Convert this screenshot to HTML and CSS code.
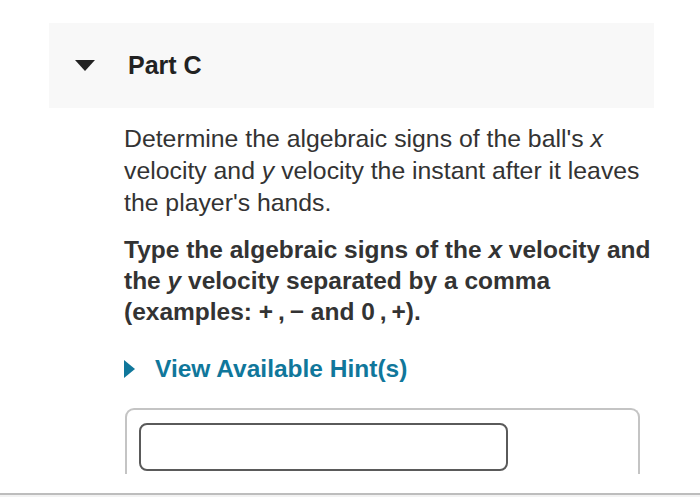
FILE: index.html
```html
<!DOCTYPE html>
<html>
<head>
<meta charset="utf-8">
<link rel="stylesheet" href="styles.css">
</head>
<body>
<div class="page">
  <div class="part-header">
    <span class="caret-down"></span>
    <span class="part-title">Part C</span>
  </div>
  <div class="part-body">
    <p class="prompt">Determine the algebraic signs of the ball's <i>x</i> velocity and <i>y</i> velocity the instant after it leaves the player's hands.</p>
    <p class="instr">Type the algebraic signs of the <i>x</i> velocity and the <i>y</i> velocity separated by a comma (examples: +&thinsp;,&thinsp;&minus; and 0&thinsp;,&thinsp;+).</p>
    <div class="hint">
      <span class="caret-right"></span>
      <span class="hint-text">View Available Hint(s)</span>
    </div>
    <div class="answer-box">
      <div class="answer-input"></div>
    </div>
  </div>
</div>
<div class="footer-line"></div>
</body>
</html>
```

FILE: styles.css
```css
html, body {
  margin: 0;
  padding: 0;
  background: #ffffff;
}
body {
  font-family: "Liberation Sans", Arial, sans-serif;
  color: #333333;
  width: 700px;
  height: 497px;
  overflow: hidden;
}
.page {
  height: 474px;
  overflow: hidden;
  padding-top: 23px;
  box-sizing: border-box;
}
.part-header {
  margin-left: 49px;
  width: 605px;
  height: 85px;
  background: #f8f8f8;
  display: flex;
  align-items: center;
}
.caret-down {
  width: 0;
  height: 0;
  border-left: 10px solid transparent;
  border-right: 10px solid transparent;
  border-top: 11px solid #222222;
  margin-left: 26px;
  margin-right: 33px;
}
.part-title {
  font-size: 25px;
  font-weight: bold;
  color: #222222;
}
.part-body {
  padding-left: 124px;
  padding-right: 40px;
}
.prompt {
  margin: 15px 0 0 0;
  font-size: 24.8px;
  line-height: 32px;
}
.instr {
  margin: 15px 0 0 0;
  font-size: 24.5px;
  line-height: 31px;
  font-weight: bold;
}
.hint {
  display: flex;
  align-items: center;
  margin-top: 27px;
  height: 30px;
}
.caret-right {
  width: 0;
  height: 0;
  border-top: 9px solid transparent;
  border-bottom: 9px solid transparent;
  border-left: 11px solid #10779b;
  margin-right: 20px;
}
.hint-text {
  font-size: 24.5px;
  font-weight: bold;
  color: #10779b;
}
.answer-box {
  margin-top: 24px;
  margin-left: 1px;
  width: 515px;
  height: 100px;
  box-sizing: border-box;
  border: 2px solid #c4c4c4;
  border-bottom: none;
  border-radius: 9px 9px 0 0;
  padding: 13px 0 0 12px;
}
.answer-input {
  width: 369px;
  height: 48px;
  box-sizing: border-box;
  border: 2px solid #5a5a5a;
  border-radius: 8px;
  background: #ffffff;
}
.footer-line {
  margin-top: 19px;
  height: 4px;
  border-top: 2px solid #bdbdbd;
  background: #f2f2f2;
}
```
